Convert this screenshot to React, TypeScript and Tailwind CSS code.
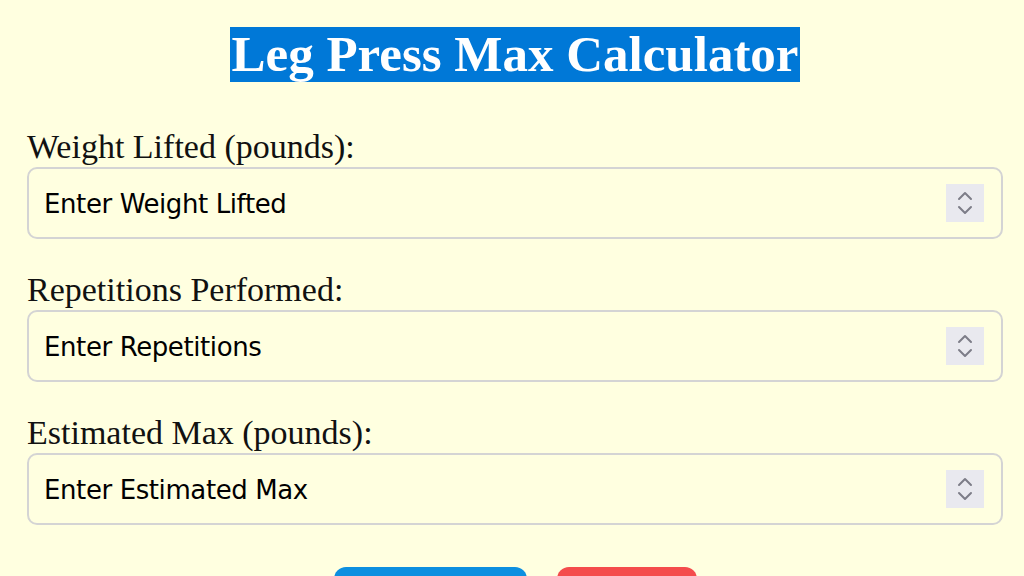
import React from 'react';

const fields = [
  { id: 'weight', label: 'Weight Lifted (pounds):', placeholder: 'Enter Weight Lifted' },
  { id: 'reps', label: 'Repetitions Performed:', placeholder: 'Enter Repetitions' },
  { id: 'max', label: 'Estimated Max (pounds):', placeholder: 'Enter Estimated Max' },
];

const Spinner: React.FC = () => (
  <div className="w-[38px] h-[38px] bg-[#e9e9ef] flex items-center justify-center shrink-0">
    <svg width="20" height="28" viewBox="0 0 20 28" fill="none" stroke="#7d7d88" strokeWidth="2" strokeLinecap="round" strokeLinejoin="round">
      <path d="M4 10 L10 4 L16 10" />
      <path d="M4 18 L10 24 L16 18" />
    </svg>
  </div>
);

export default function App() {
  return (
    <div className="min-h-screen bg-[#ffffe0] pl-[27px] pr-[21px] pt-[27px] font-['Liberation_Serif',serif]">
      <div className="flex justify-center">
        <h1 className="bg-[#0078d7] text-white font-bold text-[51px] leading-[55px] px-[1px]">
          Leg Press Max Calculator
        </h1>
      </div>

      <div className="mt-[46px] flex flex-col gap-[32px]">
        {fields.map(f => (
          <div key={f.id} className="flex flex-col">
            <label htmlFor={f.id} className="text-[34px] leading-[37px] text-[#111] mb-[2px]">
              {f.label}
            </label>
            <div className="h-[72px] border-2 border-[#d4d4d4] rounded-[10px] flex items-center pl-[15px] pr-[17px]">
              <input
                id={f.id}
                placeholder={f.placeholder}
                className="flex-1 bg-transparent outline-none text-[26px] text-black placeholder:text-black font-['DejaVu_Sans',sans-serif] tracking-[-0.4px] pt-[3px]"
              />
              <Spinner />
            </div>
          </div>
        ))}
      </div>

      <div className="mt-[42px] flex justify-center gap-[30px]">
        <button className="w-[193px] h-[64px] rounded-[12px] bg-[#0d8fe0] text-white text-[24px] font-['DejaVu_Sans',sans-serif]">
          Calculate
        </button>
        <button className="w-[140px] h-[64px] rounded-[12px] bg-[#f44c4c] text-white text-[24px] font-['DejaVu_Sans',sans-serif]">
          Reset
        </button>
      </div>
    </div>
  );
}
